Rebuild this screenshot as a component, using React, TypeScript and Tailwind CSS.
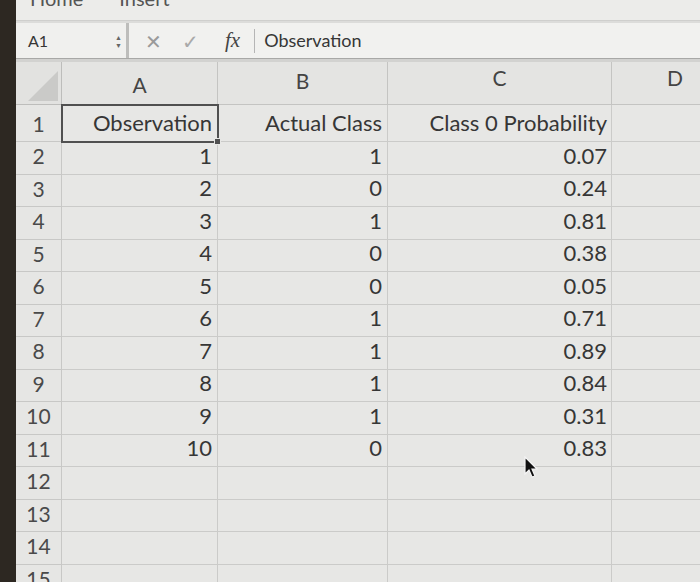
import React from 'react';

const rows: [string, string, string, string][] = [
  ['1', 'Observation', 'Actual Class', 'Class 0 Probability'],
  ['2', '1', '1', '0.07'],
  ['3', '2', '0', '0.24'],
  ['4', '3', '1', '0.81'],
  ['5', '4', '0', '0.38'],
  ['6', '5', '0', '0.05'],
  ['7', '6', '1', '0.71'],
  ['8', '7', '1', '0.89'],
  ['9', '8', '1', '0.84'],
  ['10', '9', '1', '0.31'],
  ['11', '10', '0', '0.83'],
  ['12', '', '', ''],
  ['13', '', '', ''],
  ['14', '', '', ''],
  ['15', '', '', ''],
];

const Cursor: React.FC = () => (
  <svg className="absolute left-[524px] top-[456px]" width="16" height="24" viewBox="0 0 16 24">
    <path d="M1 1 L1 18 L5 14 L8 21 L11 20 L8 13 L13 13 Z" fill="#111" stroke="#f4f4f4" strokeWidth="1.2" />
  </svg>
);

export default function App() {
  return (
    <div className="relative w-[700px] h-[582px] overflow-hidden flex bg-[#2d2822] font-['Lato',sans-serif] text-[#363636]">
      <div className="w-[16px] shrink-0" />
      <div className="flex-1 flex flex-col bg-[#e7e7e5] min-w-0">
        {/* ribbon remnant */}
        <div className="h-[21px] shrink-0 bg-[#ececea] border-b border-[#cfcfcd] overflow-hidden flex gap-[36px] pl-[14px] text-[20px] leading-[20px] text-[#555]">
          <span className="-mt-[12px]">Home</span>
          <span className="-mt-[12px]">Insert</span>
        </div>

        {/* formula bar */}
        <div className="h-[37px] shrink-0 flex items-stretch bg-[#dcdcda] pt-[2px]">
          <div className="w-[110px] bg-[#f0f0ee] flex items-center justify-between pl-[12px] pr-[4px] text-[16px]">
            <span>A1</span>
            <span className="flex flex-col text-[7px] leading-[8px] text-[#666]">
              <span>▲</span>
              <span>▼</span>
            </span>
          </div>
          <div className="w-[3px] bg-[#bdbdbb]" />
          <div className="flex-1 bg-[#f1f1ef] flex items-center text-[17px]">
            <span className="ml-[16px] text-[#9a9a9a] text-[20px] leading-none">✕</span>
            <span className="ml-[20px] text-[#a9a9a9] text-[20px] leading-none">✓</span>
            <span className="ml-[26px] font-['Liberation_Serif',serif] italic text-[21px] text-[#444]">fx</span>
            <span className="ml-[14px] w-px h-[24px] bg-[#b5b5b5]" />
            <span className="ml-[9px] text-[18px]">Observation</span>
          </div>
        </div>
        <div className="h-[4px] shrink-0 bg-[#d2d2d0] border-t border-[#a8a8a6]" />

        {/* sheet grid */}
        <div className="shrink-0 grid grid-cols-[46px_156px_170px_224px_1fr]">
          <div className="relative h-[43px] bg-[#e2e2e0] border-r border-b border-[#bdbdbb] overflow-hidden">
            <div className="absolute right-[3px] bottom-[3px] w-0 h-0 border-l-[30px] border-l-transparent border-b-[30px] border-b-[#cacac8]" />
          </div>
          {['A', 'B', 'C'].map((c, i) => (
            <div
              key={c}
              className={`h-[43px] bg-[#e4e4e2] border-r border-b border-[#c4c4c2] flex items-end justify-center text-[21px] text-[#444] ${
                ['pb-[4px]', 'pb-[8px]', 'pb-[11px]'][i]
              }`}
            >
              {c}
            </div>
          ))}
          <div className="h-[43px] bg-[#e4e4e2] border-b border-[#c4c4c2] flex items-start pl-[55px] text-[21px] text-[#444]">
            D
          </div>

          {rows.map(([n, a, b, c], i) => {
            const h = i === 0 ? 'h-[37px]' : 'h-[32.5px]';
            return (
              <React.Fragment key={n}>
                <div className={`${h} bg-[#e6e6e4] border-r border-b border-[#c8c8c6] flex items-end justify-center pb-[2px] text-[21px] text-[#4a4a4a]`}>
                  {n}
                </div>
                <div
                  className={`${h} relative border-r border-b border-[#cbcbc9] flex items-end justify-end pr-[5px] pb-[2px] text-[22px] ${
                    i === 0 ? 'outline-2 outline-[#505050] -outline-offset-1 z-10' : ''
                  }`}
                >
                  {a}
                  {i === 0 && <span className="absolute -right-[4px] -bottom-[4px] w-[7px] h-[7px] bg-[#505050] border border-[#e7e7e5]" />}
                </div>
                <div className={`${h} border-r border-b border-[#cbcbc9] flex items-end justify-end pr-[5px] pb-[2px] text-[22px]`}>
                  {b}
                </div>
                <div className={`${h} border-r border-b border-[#cbcbc9] flex items-end justify-end pr-[4px] pb-[2px] text-[22px]`}>
                  {c}
                </div>
                <div className={`${h} border-b border-[#cbcbc9]`} />
              </React.Fragment>
            );
          })}
        </div>
      </div>
      <Cursor />
    </div>
  );
}
